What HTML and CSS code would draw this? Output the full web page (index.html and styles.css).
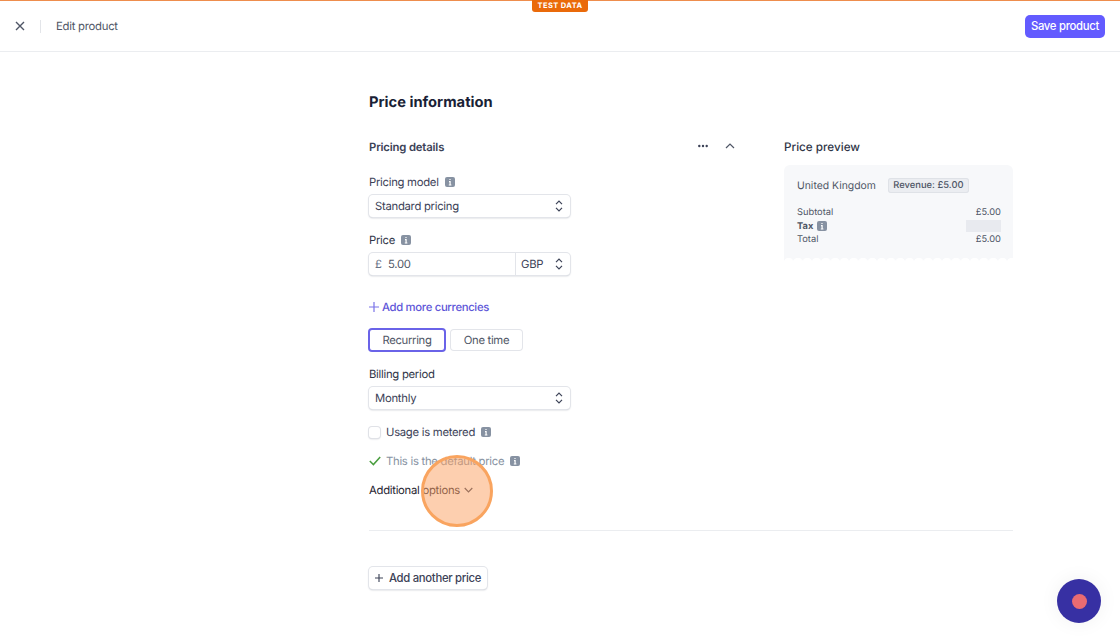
FILE: index.html
```html
<!DOCTYPE html>
<html lang="en">
<head>
<meta charset="utf-8">
<title>Edit product</title>
<link rel="stylesheet" href="styles.css">
</head>
<body>
<div class="page">
  <header class="topbar">
    <div class="badge">TEST DATA</div>
    <svg class="close" width="10" height="10" viewBox="0 0 10 10"><path d="M1 1l8 8M9 1l-8 8" stroke="#4f5666" stroke-width="1.4" fill="none"/></svg>
    <span class="divider"></span>
    <span class="crumb">Edit product</span>
    <button class="save">Save product</button>
  </header>
  <main class="main">
    <h1 class="title">Price information</h1>
    <div class="columns">
      <section class="form">
        <div class="form-head">
          <h2 class="section-title">Pricing details</h2>
          <svg class="more" width="10" height="4" viewBox="0 0 10 4"><circle cx="1.3" cy="2" r="1.2"/><circle cx="5" cy="2" r="1.2"/><circle cx="8.7" cy="2" r="1.2"/></svg>
          <svg class="collapse" width="10" height="6" viewBox="0 0 10 6"><path d="M1 5l4-4 4 4" stroke="#4f5666" stroke-width="1.2" fill="none"/></svg>
        </div>
        <div class="label label-first">Pricing model <svg class="info" viewBox="0 0 10 10"><rect width="10" height="10" rx="2"/><path d="M5 2v1M4 4.6h1.1V8M3.8 8h2.6" stroke="#fff" stroke-width="1.2" fill="none"/></svg></div>
        <div class="select"><span>Standard pricing</span><svg class="updown" width="8" height="12" viewBox="0 0 8 12"><path d="M1 4.2l3-3 3 3M1 7.8l3 3 3-3" stroke="#3c4257" stroke-width="1.2" fill="none"/></svg></div>
        <div class="label label-price">Price <svg class="info" viewBox="0 0 10 10"><rect width="10" height="10" rx="2"/><path d="M5 2v1M4 4.6h1.1V8M3.8 8h2.6" stroke="#fff" stroke-width="1.2" fill="none"/></svg></div>
        <div class="select price-field">
          <span class="pound">£</span><span class="amount">5.00</span>
          <span class="currency"><span>GBP</span><svg class="updown" width="8" height="12" viewBox="0 0 8 12"><path d="M1 4.2l3-3 3 3M1 7.8l3 3 3-3" stroke="#3c4257" stroke-width="1.2" fill="none"/></svg></span>
        </div>
        <div class="add-link"><svg width="10" height="10" viewBox="0 0 10 10"><path d="M5 0v10M0 5h10" stroke="#7a73e8" stroke-width="1.2" fill="none"/></svg>Add more currencies</div>
        <div class="segments">
          <span class="segment segment-on">Recurring</span>
          <span class="segment segment-off">One time</span>
        </div>
        <div class="label label-billing">Billing period</div>
        <div class="select"><span>Monthly</span><svg class="updown" width="8" height="12" viewBox="0 0 8 12"><path d="M1 4.2l3-3 3 3M1 7.8l3 3 3-3" stroke="#3c4257" stroke-width="1.2" fill="none"/></svg></div>
        <div class="check-row"><span class="checkbox"></span>Usage is metered <svg class="info" viewBox="0 0 10 10"><rect width="10" height="10" rx="2"/><path d="M5 2v1M4 4.6h1.1V8M3.8 8h2.6" stroke="#fff" stroke-width="1.2" fill="none"/></svg></div>
        <div class="default-row"><svg class="tick" width="12" height="10" viewBox="0 0 12 10"><path d="M.8 5l3.600 3.600L11.200 1" stroke="#4a9e3f" stroke-width="1.5" fill="none"/></svg>This is the default price <svg class="info" viewBox="0 0 10 10"><rect width="10" height="10" rx="2"/><path d="M5 2v1M4 4.6h1.1V8M3.8 8h2.6" stroke="#fff" stroke-width="1.2" fill="none"/></svg></div>
        <div class="options">Additional options <svg width="9" height="6" viewBox="0 0 9 6"><path d="M.7 1l3.800 3.800L8.300 1" stroke="#3c4257" stroke-width="1.2" fill="none"/></svg></div>
      </section>
      <aside class="preview">
        <h2 class="preview-title">Price preview</h2>
        <div class="card">
          <div class="card-head"><span class="country">United Kingdom</span><span class="revenue">Revenue: £5.00</span></div>
          <div class="row"><span>Subtotal</span><span>£5.00</span></div>
          <div class="row row-tax"><span class="tax">Tax <svg class="info" viewBox="0 0 10 10"><rect width="10" height="10" rx="2"/><path d="M5 2v1M4 4.6h1.1V8M3.8 8h2.6" stroke="#fff" stroke-width="1.2" fill="none"/></svg></span><span class="tax-blank"></span></div>
          <div class="row"><span>Total</span><span>£5.00</span></div>
        </div>
      </aside>
    </div>
    <hr class="rule">
    <button class="add-price"><svg width="10" height="10" viewBox="0 0 10 10"><path d="M5 0v10M0 5h10" stroke="#3c4257" stroke-width="1.4" fill="none"/></svg>Add another price</button>
  </main>
  <div class="hotspot"></div>
  <div class="record"><span class="record-dot"></span></div>
</div>
</body>
</html>
```
FILE: styles.css
```css
* { box-sizing: border-box; }
html, body { margin: 0; padding: 0; }
body { font-family: Inter, "Liberation Sans", sans-serif; color: #3c4257; background: #fff; text-rendering: geometricPrecision; }
.page { position: relative; width: 1120px; height: 641px; overflow: hidden; }
.topbar { position: relative; height: 52px; display: flex; align-items: center; padding: 0 15px 0 15px; border-top: 1px solid #ee8d4d; border-bottom: 1px solid #ebedf0; }
.badge { position: absolute; top: -1px; left: 532px; width: 56px; height: 12px; background: #ea6a0a; color: #fff; font-size: 7.500px; font-weight: 700; letter-spacing: .4px; line-height: 12px; text-align: center; border-radius: 0 0 3px 3px; }
.close { margin-right: 15px; }
.divider { width: 1px; height: 13px; background: #e3e5e9; margin-right: 15px; }
.crumb { font-size: 11.300px; letter-spacing: -.25px; color: #4f5666; }
.save { margin-left: auto; width: 80px; height: 23px; padding: 0; border: 0; border-radius: 5px; background: #635bff; color: #fff; font: 500 11.300px Inter, sans-serif; letter-spacing: -.28px; white-space: nowrap; }
.main { width: 644px; margin-left: 369px; }
.title { margin: 0; padding-top: 41px; font-size: 14.700px; line-height: 18px; font-weight: 700; color: #1a1f36; }
.columns { display: flex; margin-top: 26px; }
.form { width: 368px; margin-right: 47px; }
.form-head { display: flex; align-items: center; height: 18px; }
.section-title { margin: 0; padding-top: 1px; font-size: 11.300px; letter-spacing: -.16px; font-weight: 600; color: #3c4257; flex: 1; }
.more { fill: #3c4257; margin-right: 17px; }
.collapse { margin-right: 2px; }
.label { display: flex; align-items: center; gap: 6px; font-size: 11.300px; letter-spacing: -.28px; line-height: 16px; color: #3c4257; }
.label-first { margin-top: 19px; margin-bottom: 5px; }
.label-price { margin-top: 15px; margin-bottom: 5px; color: #2f3547; }
.label-billing { margin-top: 14px; margin-bottom: 5px; color: #2f3547; }
.info { width: 10px; height: 10px; fill: #8792a2; flex: none; }
.select { width: 201px; height: 22px; display: flex; align-items: center; justify-content: space-between; padding: 0 7px 0 6px; background: #fff; border-radius: 4px; font-size: 11.300px; letter-spacing: -.28px; color: #3c4257; box-shadow: 0 0 0 1px #e3e5ea, 0 1px 2px 0 #b9bdc6; }
.price-field { justify-content: flex-start; padding-right: 0; }
.pound { width: 13px; color: #697386; }
.amount { flex: 1; color: #4f5666; }
.currency { width: 55px; height: 22px; display: flex; align-items: center; justify-content: space-between; padding: 0 7px 0 5px; border-left: 1px solid #e3e5ea; }
.add-link { display: flex; align-items: center; gap: 3px; margin-top: 24px; font-size: 11.300px; letter-spacing: -.32px; line-height: 16px; font-weight: 500; color: #5e56d8; }
.segments { display: flex; align-items: center; gap: 4px; margin-top: 13px; margin-left: -1px; }
.segment { display: flex; align-items: center; justify-content: center; border-radius: 4px; font-size: 11.300px; letter-spacing: -.32px; color: #4f5666; }
.segment-off { width: 73px; height: 22px; box-shadow: inset 0 0 0 1px #e3e5ea; }
.segment-on { width: 78px; height: 24px; box-shadow: inset 0 0 0 2px #6a63e8; }
.check-row, .default-row { display: flex; align-items: center; font-size: 11.300px; letter-spacing: -.28px; line-height: 16px; }
.check-row { margin-top: 15px; }
.checkbox { width: 11px; height: 11px; margin-right: 6px; border-radius: 3px; box-shadow: 0 0 0 1px #e0e2e7, 0 1px 2px #c6c9d0; background: #fff; }
.check-row .info { margin-left: 6px; }
.default-row { margin-top: 13px; color: #8792a2; }
.default-row .info { margin-left: 6px; }
.tick { margin-right: 5px; }
.options { display: flex; align-items: center; gap: 4px; margin-top: 13px; font-size: 11.300px; letter-spacing: -.28px; line-height: 16px; color: #1f2430; }
.preview { width: 229px; }
.preview-title { margin: 0; font-size: 11.700px; line-height: 20px; font-weight: 500; color: #2f3547; }
.card { position: relative; margin-top: 8px; height: 96px; padding: 11px 12px 0 13px; background: #f7f8fa; border-radius: 6px 6px 0 0; font-size: 9.300px; color: #4f5666; }
.card::after { content: ""; position: absolute; left: 0; right: 0; bottom: 0; height: 5px; background: radial-gradient(circle at 50% 130%, #fff 4.500px, transparent 5px) 0 0 / 9.300px 5px repeat-x; }
.card-head { display: flex; align-items: center; gap: 12px; height: 18px; margin-bottom: 12px; }
.country { font-size: 10.400px; }
.revenue { width: 81px; height: 15px; text-align: center; line-height: 15px; font-size: 9.400px; font-weight: 500; background: #ebedf1; border-radius: 3px; box-shadow: inset 0 0 0 1px #dfe2e7; }
.row { display: flex; justify-content: space-between; align-items: center; height: 13px; }
.row-tax { height: 14px; }
.tax { display: flex; align-items: center; gap: 4px; font-weight: 700; }
.tax-blank { width: 35px; height: 12px; background: #e8eaef; }
.rule { margin: 32px 0 0; border: 0; border-top: 1px solid #ebedf0; }
.add-price { display: flex; align-items: center; gap: 6px; margin-top: 36px; width: 118px; height: 22px; padding: 0 6px; border: 0; border-radius: 4px; background: #fff; color: #3c4257; font: 500 11.300px Inter, sans-serif; letter-spacing: -.3px; white-space: nowrap; box-shadow: 0 0 0 1px #e3e5ea, 0 1px 2px #b9bdc6; }
.hotspot { position: absolute; left: 421px; top: 455px; width: 72px; height: 72px; border-radius: 50%; background: rgba(251, 160, 95, .5); border: 3px solid #f9a45f; }
.record { position: absolute; left: 1057px; top: 579px; width: 44px; height: 44px; display: flex; align-items: center; justify-content: center; border-radius: 50%; background: #3730a3; box-shadow: 0 0 20px rgba(0, 0, 0, .06); }
.record-dot { width: 15px; height: 15px; border-radius: 50%; background: #e96b72; }
```
